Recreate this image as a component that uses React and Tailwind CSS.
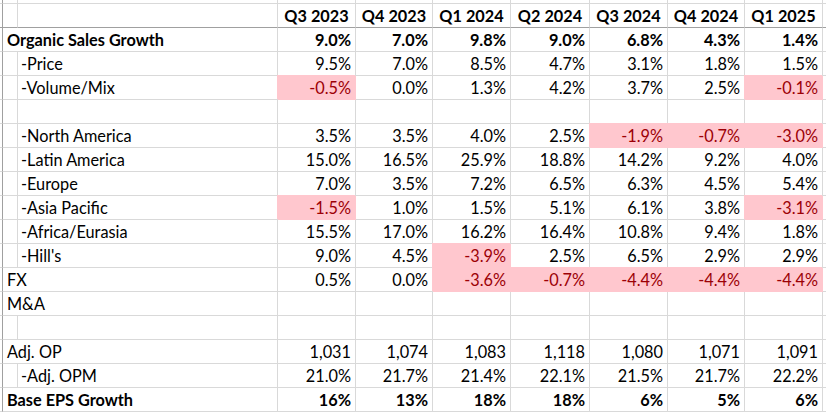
import React from 'react';

const quarters = ['Q3 2023', 'Q4 2023', 'Q1 2024', 'Q2 2024', 'Q3 2024', 'Q4 2024', 'Q1 2025'];

const rows = [
    {label: 'Organic Sales Growth', top: true, bold: true, vals: ['9.0%', '7.0%', '9.8%', '9.0%', '6.8%', '4.3%', '1.4%']},
    {label: '-Price', vals: ['9.5%', '7.0%', '8.5%', '4.7%', '3.1%', '1.8%', '1.5%']},
    {label: '-Volume/Mix', vals: ['-0.5%', '0.0%', '1.3%', '4.2%', '3.7%', '2.5%', '-0.1%']},
    {label: '', vals: []},
    {label: '-North America', vals: ['3.5%', '3.5%', '4.0%', '2.5%', '-1.9%', '-0.7%', '-3.0%']},
    {label: '-Latin America', vals: ['15.0%', '16.5%', '25.9%', '18.8%', '14.2%', '9.2%', '4.0%']},
    {label: '-Europe', vals: ['7.0%', '3.5%', '7.2%', '6.5%', '6.3%', '4.5%', '5.4%']},
    {label: '-Asia Pacific', vals: ['-1.5%', '1.0%', '1.5%', '5.1%', '6.1%', '3.8%', '-3.1%']},
    {label: '-Africa/Eurasia', vals: ['15.5%', '17.0%', '16.2%', '16.4%', '10.8%', '9.4%', '1.8%']},
    {label: "-Hill's", vals: ['9.0%', '4.5%', '-3.9%', '2.5%', '6.5%', '2.9%', '2.9%']},
    {label: 'FX', top: true, vals: ['0.5%', '0.0%', '-3.6%', '-0.7%', '-4.4%', '-4.4%', '-4.4%']},
    {label: 'M&A', top: true, vals: []},
    {label: '', vals: []},
    {label: 'Adj. OP', top: true, vals: ['1,031', '1,074', '1,083', '1,118', '1,080', '1,071', '1,091']},
    {label: '-Adj. OPM', vals: ['21.0%', '21.7%', '21.4%', '22.1%', '21.5%', '21.7%', '22.2%']},
    {label: 'Base EPS Growth', top: true, bold: true, vals: ['16%', '13%', '18%', '18%', '6%', '5%', '6%']},
];

const cell = 'h-[24px] border-b border-r border-[#d9d9d9] leading-[24px] whitespace-nowrap';

const App = () => {
    return (
        <div className="w-[826px] h-[412px] overflow-hidden bg-white text-black text-[16.3px]" style={{fontFamily: 'Lato, "Open Sans", sans-serif'}}>
            <div className="grid grid-cols-[3px_15px_260px_78px_77px_78px_79px_78px_77px_78px_1fr]">
                {/* partial row above the header */}
                <div className="h-[4px] border-b border-r border-[#d9d9d9] border-r-[#a0a0a0]"></div>
                {Array.from({length: 9}).map((_, i) => (
                    <div key={'t' + i} className="h-[4px] border-b border-r border-[#d9d9d9]"></div>
                ))}
                <div className="h-[4px] border-b border-[#d9d9d9]"></div>

                {/* header */}
                <div className={`${cell} border-r-[#a0a0a0] border-b-[#a0a0a0]`}></div>
                <div className={`${cell} border-b-[#a0a0a0]`}></div>
                <div className={`${cell} border-b-[#a0a0a0]`}></div>
                {quarters.map((q) => (
                    <div key={q} className={`${cell} border-b-[#a0a0a0] text-center font-bold`}>
                        {q}
                    </div>
                ))}
                <div className={`${cell} border-r-0 border-b-[#a0a0a0]`}></div>

                {rows.map((row, r) => (
                    <React.Fragment key={r}>
                        <div className={`${cell} border-r-[#a0a0a0]`}></div>
                        {row.top ? (
                            <div className={`${cell} col-span-2 pl-[4px] ${row.bold ? 'font-bold' : ''}`}>
                                {row.label}
                            </div>
                        ) : (
                            <>
                                <div className={cell}></div>
                                <div className={`${cell} pl-[3px]`}>{row.label}</div>
                            </>
                        )}
                        {quarters.map((q, i) => {
                            const v = row.vals[i] || '';
                            const neg = v.startsWith('-');
                            return (
                                <div
                                    key={q}
                                    className={`${cell} text-right pr-[4px] ${row.bold ? 'font-bold' : ''} ${neg ? 'bg-[#ffc7ce] text-[#9c0006] border-[#ffc7ce] shadow-[-1px_-1px_0_0_#ffc7ce]' : ''}`}
                                >
                                    {v}
                                </div>
                            );
                        })}
                        <div className={`${cell} border-r-0`}></div>
                    </React.Fragment>
                ))}
            </div>
        </div>
    );
};

export default App;
